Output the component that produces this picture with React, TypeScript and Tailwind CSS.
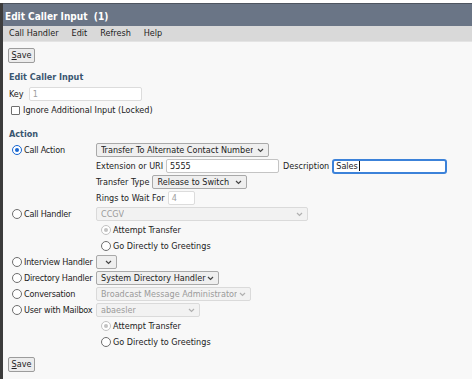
import React from 'react';

const FONT = '[font-family:"DejaVu_Sans",sans-serif] [font-stretch:condensed]';

function Chevron({ muted }: { muted?: boolean }) {
  return (
    <svg width="7" height="5" viewBox="0 0 7 5" className="shrink-0">
      <path d="M1 1l2.5 2.5L6 1" fill="none" stroke={muted ? '#b0b0b0' : '#444'} strokeWidth="1.2" />
    </svg>
  );
}

function Radio({ checked, disabled }: { checked?: boolean; disabled?: boolean }) {
  if (checked) {
    const ring = disabled ? 'border-[#c2c2c2]' : 'border-[#1766d1]';
    const dot = disabled ? 'bg-[#c2c2c2]' : 'bg-[#1766d1]';
    return (
      <span className={`flex h-[10px] w-[10px] shrink-0 items-center justify-center rounded-full border-[1.5px] bg-white ${ring}`}>
        <span className={`h-[4px] w-[4px] rounded-full ${dot}`} />
      </span>
    );
  }
  return (
    <span
      className={`h-[10px] w-[10px] shrink-0 rounded-full border bg-white ${disabled ? 'border-[#c8c8c8]' : 'border-[#6e6e6e]'}`}
    />
  );
}

function Select({ value, width, disabled }: { value?: string; width: string; disabled?: boolean }) {
  return (
    <div
      className={`flex h-[14px] items-center justify-between rounded-[2px] border pl-[4px] pr-[4px] ${width} ${
        disabled ? 'border-[#dadada] bg-[#f2f2f2] text-[#9a9a9a]' : 'border-[#a9a9a9] bg-[#efefef] text-[#222]'
      }`}
    >
      <span className="truncate">{value}</span>
      <Chevron muted={disabled} />
    </div>
  );
}

function TextBox({ value, width, disabled }: { value: string; width: string; disabled?: boolean }) {
  return (
    <div
      className={`flex h-[14px] items-center rounded-[2px] border bg-white pl-[3px] ${width} ${
        disabled ? 'border-[#dcdcdc] text-[#a0a0a0]' : 'border-[#c4c4c4] text-[#222]'
      }`}
    >
      {value}
    </div>
  );
}

function SaveButton() {
  return (
    <div className="flex h-[15px] w-[27px] items-center justify-center rounded-[2px] border border-[#9c9c9c] bg-[#ececec] text-[#222]">
      <span className="underline decoration-[#222] underline-offset-1">S</span>ave
    </div>
  );
}

function Row({ label, radio, children }: { label?: string; radio?: 'on' | 'off'; children?: React.ReactNode }) {
  return (
    <div className="grid h-[16px] grid-cols-[87px_1fr] items-center">
      <div className="flex items-center gap-[2px] whitespace-nowrap pl-[3px]">
        {radio && <Radio checked={radio === 'on'} />}
        {label && <span className="tracking-[-0.2px]">{label}</span>}
      </div>
      <div className="flex items-center gap-[3px] whitespace-nowrap">{children}</div>
    </div>
  );
}

function SubRadio({ label, checked }: { label: string; checked?: boolean }) {
  return (
    <Row>
      <div className="flex items-center gap-[2px] pl-[5px]">
        <Radio checked={checked} disabled={checked} />
        <span>{label}</span>
      </div>
    </Row>
  );
}

export default function App() {
  return (
    <div className={`flex h-[381px] w-[474px] bg-white pt-[3px] text-[9px] leading-none text-[#222] ${FONT}`}>
      <div className="h-[376px] w-[3px] bg-[#3c3c3c]" />
      <div className="flex h-[376px] w-[469px] flex-col bg-[#f8f8f8]">
        {/* Title bar */}
        <div className="flex h-[23px] items-center border-t border-[#4e5560] bg-[#6a7586] pl-[2px] pt-[3px] text-[10px] font-bold text-white">
          Edit Caller Input&nbsp;&nbsp;(1)
        </div>
        {/* Menu */}
        <div className="flex h-[16px] items-center gap-[13px] border-b border-[#e4e4e4] bg-[#d9d9d9] pl-[6px]">
          <span>Call Handler</span>
          <span>Edit</span>
          <span>Refresh</span>
          <span>Help</span>
        </div>

        <div className="flex flex-col pl-[5px] pt-[6px]">
          <SaveButton />

          <div className="mt-[8px] flex h-[12px] items-center pl-[1px] font-bold text-[#3a5670]">Edit Caller Input</div>

          <div className="mt-[4px] flex h-[14px] items-center gap-[5px] pl-[1px]">
            <span>Key</span>
            <TextBox value="1" width="w-[113px]" disabled />
          </div>

          <div className="mt-[2px] flex h-[14px] items-center gap-[3px] pl-[3px]">
            <span className="h-[9px] w-[9px] rounded-[1px] border border-[#6e6e6e] bg-white" />
            <span>Ignore Additional Input (Locked)</span>
          </div>

          <div className="mt-[11px] flex h-[12px] items-center pl-[1px] font-bold text-[#3a5670]">Action</div>

          <div className="flex flex-col pl-[1px] pt-[2px]">
            <Row label="Call Action" radio="on">
              <Select value="Transfer To Alternate Contact Number" width="w-[173px]" />
            </Row>
            <Row>
              <span>Extension or URI</span>
              <TextBox value="5555" width="w-[113px]" />
              <span className="ml-[1px]">Description</span>
              <div className="flex h-[15px] w-[115px] items-center rounded-[3px] border-2 border-[#3c82d9] bg-white pl-[2px]">
                Sales
                <span className="ml-[1px] h-[10px] w-px bg-[#111]" />
              </div>
            </Row>
            <Row>
              <span>Transfer Type</span>
              <Select value="Release to Switch" width="w-[95px]" />
            </Row>
            <Row>
              <span>Rings to Wait For</span>
              <TextBox value="4" width="w-[27px]" disabled />
            </Row>
            <Row label="Call Handler" radio="off">
              <Select value="CCGV" width="w-[212px]" disabled />
            </Row>
            <SubRadio label="Attempt Transfer" checked />
            <SubRadio label="Go Directly to Greetings" />
            <Row label="Interview Handler" radio="off">
              <Select width="w-[21px]" />
            </Row>
            <Row label="Directory Handler" radio="off">
              <Select value="System Directory Handler" width="w-[123px]" />
            </Row>
            <Row label="Conversation" radio="off">
              <Select value="Broadcast Message Administrator" width="w-[155px]" disabled />
            </Row>
            <Row label="User with Mailbox" radio="off">
              <Select value="abaesler" width="w-[104px]" disabled />
            </Row>
            <SubRadio label="Attempt Transfer" checked />
            <SubRadio label="Go Directly to Greetings" />
          </div>

          <div className="mt-[7px]">
            <SaveButton />
          </div>
        </div>
      </div>
    </div>
  );
}
